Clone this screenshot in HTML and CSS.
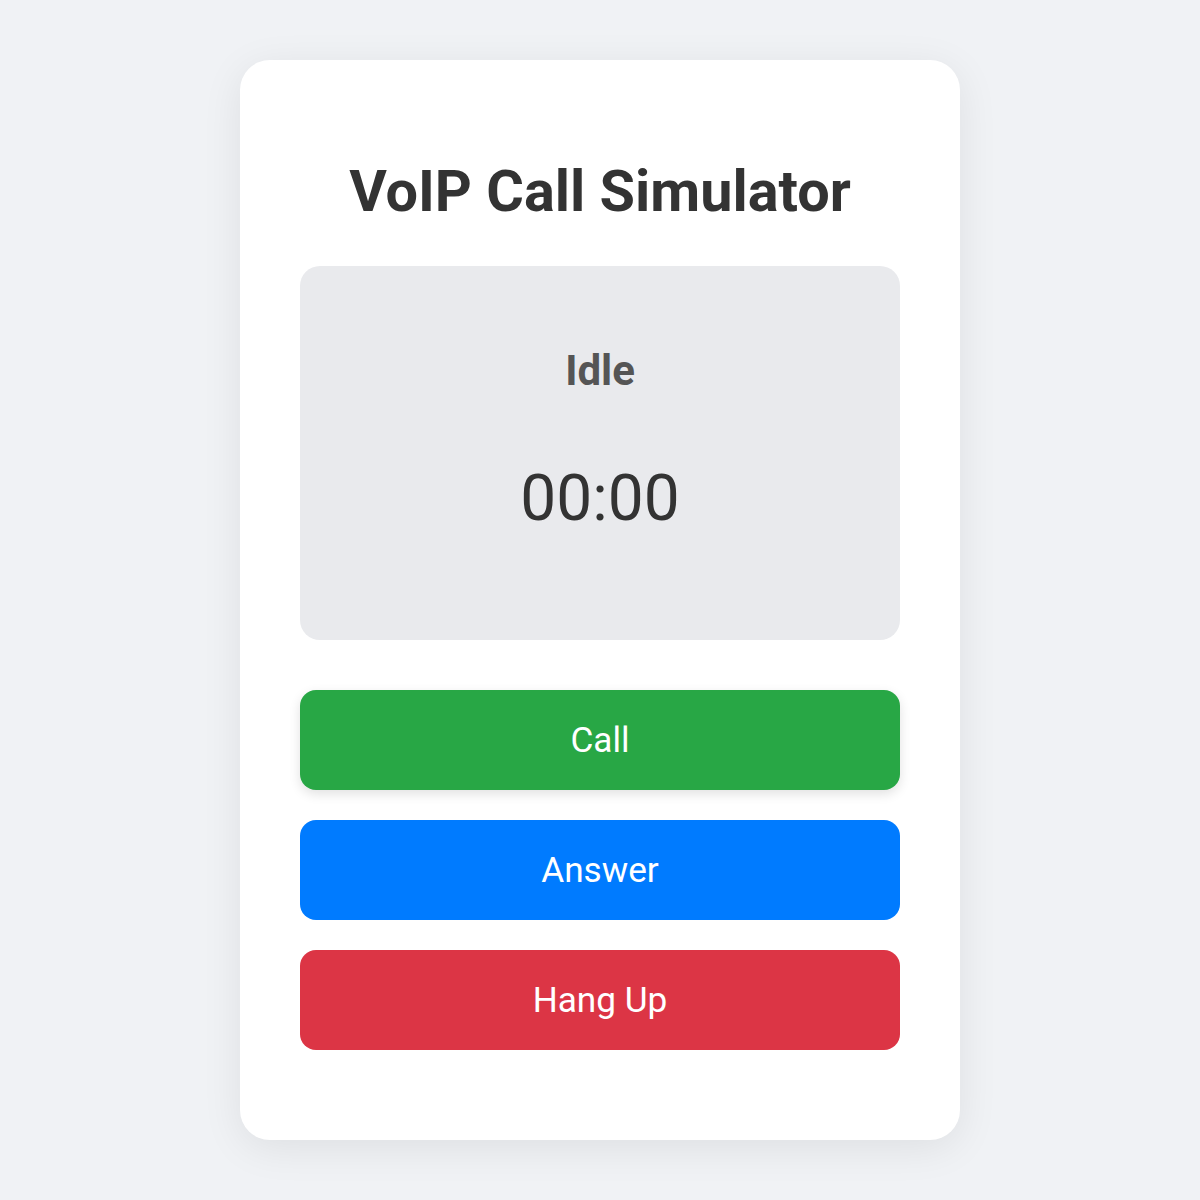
FILE: index.html
```html
<!DOCTYPE html>
<html lang="en">
<head>
    <meta charset="UTF-8">
    <meta name="viewport" content="width=device-width, initial-scale=1.0">
    <title>VoIP Call Simulator</title>
    <link rel="stylesheet" href="styles.css">
</head>
<body>
    <div class="container">
        <h1>VoIP Call Simulator</h1>

        <div class="display">
            <p id="status" class="status">Idle</p>
            <p id="timer" class="timer">00:00</p>
        </div>

        <button type="button" id="call-btn" class="btn btn-call">Call</button>
        <button type="button" id="answer-btn" class="btn btn-answer">Answer</button>
        <button type="button" id="hangup-btn" class="btn btn-hangup">Hang Up</button>
    </div>

    <script>
        document.addEventListener("DOMContentLoaded", function () {
            const statusText = document.getElementById("status");
            const timerText = document.getElementById("timer");
            let seconds = 0;
            let interval = null;

            function formatTime(s) {
                const m = Math.floor(s / 60);
                const r = s % 60;
                return String(m).padStart(2, "0") + ":" + String(r).padStart(2, "0");
            }

            document.getElementById("call-btn").addEventListener("click", function () {
                statusText.textContent = "Calling...";
            });

            document.getElementById("answer-btn").addEventListener("click", function () {
                statusText.textContent = "In Call";
                clearInterval(interval);
                seconds = 0;
                interval = setInterval(function () {
                    seconds++;
                    timerText.textContent = formatTime(seconds);
                }, 1000);
            });

            document.getElementById("hangup-btn").addEventListener("click", function () {
                clearInterval(interval);
                statusText.textContent = "Idle";
                seconds = 0;
                timerText.textContent = formatTime(seconds);
            });
        });
    </script>
</body>
</html>
```

FILE: styles.css
```css
body {
    font-family: Roboto, "Liberation Sans", Arial, sans-serif;
    background-color: #f0f2f5;
    margin: 0;
    padding: 60px 0;
}

.container {
    width: 720px;
    box-sizing: border-box;
    margin: 0 auto;
    padding: 60px;
    background-color: #fff;
    border-radius: 30px;
    box-shadow: 0 8px 40px rgba(0, 0, 0, 0.08);
    text-align: center;
}

h1 {
    font-size: 57.6px;
    font-weight: 700;
    color: #333;
    margin: 38px 0 41px;
}

.display {
    background-color: #e9eaed;
    border-radius: 20px;
    padding: 40px;
    margin-bottom: 50px;
}

.status {
    font-size: 42px;
    font-weight: 700;
    color: #555;
    margin: 40px 0;
}

.timer {
    font-size: 64px;
    color: #333;
    margin: 66px 0 64px;
}

.btn {
    display: block;
    width: 100%;
    height: 100px;
    margin: 0 0 30px;
    border: none;
    border-radius: 16px;
    color: #fff;
    font-family: inherit;
    font-size: 35.2px;
    cursor: pointer;
}

.btn-call {
    background-color: #28a745;
    box-shadow: 0 4px 12px rgba(0, 0, 0, 0.12);
}

.btn-answer {
    background-color: #007bff;
}

.btn-hangup {
    background-color: #dc3545;
}
```
